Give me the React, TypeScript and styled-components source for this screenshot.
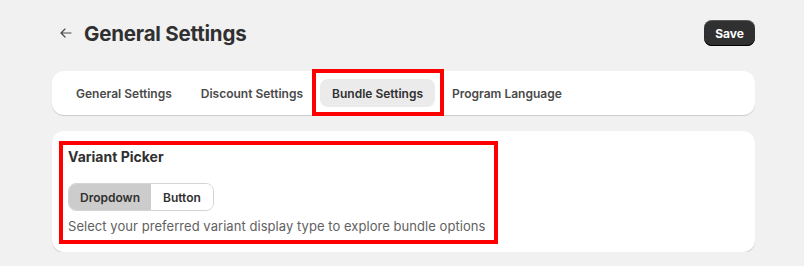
import styled, { createGlobalStyle } from "styled-components";

const GlobalStyle = createGlobalStyle`
  html, body {
    margin: 0;
    padding: 0;
    background: #f1f1f1;
    font-family: Inter, "Noto Sans", "Liberation Sans", sans-serif;
    color: #303030;
  }
`;

const Page = styled.div`
  display: flex;
  flex-direction: column;
  gap: 16px;
  padding: 20px 49px 0 52px;
`;

const Header = styled.div`
  display: flex;
  align-items: center;
  justify-content: space-between;
  height: 26px;
  margin-bottom: 9px;
`;

const TitleGroup = styled.div`
  display: flex;
  align-items: center;
  gap: 10px;
  padding-left: 6px;
`;

const BackButton = styled.button`
  display: inline-flex;
  align-items: center;
  justify-content: center;
  border: none;
  background: none;
  padding: 0;
  width: 16px;
  height: 16px;
  color: #4a4a4a;
  cursor: pointer;
`;

const Title = styled.h1`
  margin: 0;
  font-size: 20.5px;
  font-weight: 700;
  letter-spacing: -0.2px;
  color: #303030;
`;

const SaveButton = styled.button`
  height: 26px;
  padding: 0 11px;
  border: none;
  border-radius: 8px;
  background: #303030;
  color: #fff;
  font-family: inherit;
  font-size: 12px;
  font-weight: 700;
  box-shadow: inset 0 -1px 0 #000, inset 0 1px 0 rgba(255, 255, 255, 0.2);
  cursor: pointer;
`;

const Card = styled.div<{ $pad: string }>`
  background: #fff;
  border-radius: 12px;
  box-shadow: 0 1px 0 rgba(26, 26, 26, 0.07), 0 1px 1px rgba(0, 0, 0, 0.1);
  padding: ${(p) => p.$pad};
`;

const TabList = styled.div`
  display: flex;
  align-items: center;
  gap: 5px;
`;

const Tab = styled.button<{ $active?: boolean }>`
  position: relative;
  height: 28px;
  padding: 0 12px;
  border: none;
  border-radius: 8px;
  background: ${(p) => (p.$active ? "#ebebeb" : "transparent")};
  color: ${(p) => (p.$active ? "#303030" : "#4a4a4a")};
  font-family: inherit;
  font-size: 12px;
  font-weight: 600;
  cursor: pointer;
`;

const Highlight = styled.span<{ $inset: string }>`
  position: absolute;
  inset: ${(p) => p.$inset};
  border: 4px solid #ff0000;
  pointer-events: none;
`;

const Section = styled.div`
  position: relative;
  display: flex;
  flex-direction: column;
  align-items: flex-start;
  width: fit-content;
`;

const SectionTitle = styled.h2`
  margin: 0 0 16px;
  font-size: 14px;
  font-weight: 700;
  line-height: 20px;
  color: #303030;
`;

const Segmented = styled.div`
  display: flex;
  border: 1px solid #d4d4d4;
  border-radius: 8px;
  overflow: hidden;
`;

const SegmentButton = styled.button<{ $selected?: boolean }>`
  height: 26px;
  padding: 0 ${(p) => (p.$selected ? "11px" : "12px")};
  border: none;
  background: ${(p) => (p.$selected ? "#cccccc" : "#ffffff")};
  color: #303030;
  font-family: inherit;
  font-size: 12px;
  font-weight: 600;
  cursor: pointer;
`;

const HelpText = styled.p`
  margin: 5px 0 0;
  font-size: 13px;
  line-height: 20px;
  letter-spacing: 0.05px;
  color: #616161;
`;

function ArrowLeft() {
  return (
    <svg width="16" height="16" viewBox="0 0 20 20" fill="currentColor" aria-hidden="true">
      <path d="M17 10a.75.75 0 0 1-.75.75H5.56l3.72 3.72a.75.75 0 1 1-1.06 1.06l-5-5a.75.75 0 0 1 0-1.06l5-5a.75.75 0 0 1 1.06 1.06L5.56 9.25h10.69A.75.75 0 0 1 17 10Z" />
    </svg>
  );
}

const tabs = ["General Settings", "Discount Settings", "Bundle Settings", "Program Language"];

export default function App() {
  return (
    <>
      <GlobalStyle />
      <Page>
        <Header>
          <TitleGroup>
            <BackButton aria-label="Back">
              <ArrowLeft />
            </BackButton>
            <Title>General Settings</Title>
          </TitleGroup>
          <SaveButton>Save</SaveButton>
        </Header>

        <Card $pad="8px 12px">
          <TabList>
            {tabs.map((t) => (
              <Tab key={t} $active={t === "Bundle Settings"}>
                {t}
                {t === "Bundle Settings" && <Highlight $inset="-10px -9px -9px -8px" />}
              </Tab>
            ))}
          </TabList>
        </Card>

        <Card $pad="16px">
          <Section>
            <SectionTitle>Variant Picker</SectionTitle>
            <Segmented>
              <SegmentButton $selected>Dropdown</SegmentButton>
              <SegmentButton>Button</SegmentButton>
            </Segmented>
            <HelpText>Select your preferred variant display type to explore bundle options</HelpText>
            <Highlight $inset="-6px -13px -8px -9px" />
          </Section>
        </Card>
      </Page>
    </>
  );
}
